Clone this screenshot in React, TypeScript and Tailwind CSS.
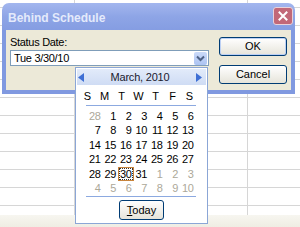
import React from "react";

const weeks: { d: number; muted?: boolean }[][] = [
  [{ d: 28, muted: true }, { d: 1 }, { d: 2 }, { d: 3 }, { d: 4 }, { d: 5 }, { d: 6 }],
  [{ d: 7 }, { d: 8 }, { d: 9 }, { d: 10 }, { d: 11 }, { d: 12 }, { d: 13 }],
  [{ d: 14 }, { d: 15 }, { d: 16 }, { d: 17 }, { d: 18 }, { d: 19 }, { d: 20 }],
  [{ d: 21 }, { d: 22 }, { d: 23 }, { d: 24 }, { d: 25 }, { d: 26 }, { d: 27 }],
  [{ d: 28 }, { d: 29 }, { d: 30 }, { d: 31 }, { d: 1, muted: true }, { d: 2, muted: true }, { d: 3, muted: true }],
  [4, 5, 6, 7, 8, 9, 10].map((d) => ({ d, muted: true })),
];

const dayNames = ["S", "M", "T", "W", "T", "F", "S"];

// spreadsheet row behind the dialog
const SheetRow = ({ h }: { h: string }) => (
  <div className={`flex ${h} border-b border-[#d6d6d6]`}>
    <div className="w-[75px] border-r border-[#d6d6d6]" />
    <div className="w-[173px] border-r border-[#d6d6d6]" />
    <div className="flex-1" />
  </div>
);

const XpButton = ({ children, className = "" }: { children: React.ReactNode; className?: string }) => (
  <div
    className={`flex items-center justify-center rounded-[3px] border border-[#003c74] bg-gradient-to-b from-white to-[#e6e4da] text-[11px] text-black ${className}`}
  >
    {children}
  </div>
);

export default function App() {
  return (
    <div
      className="relative w-[300px] h-[227px] overflow-hidden bg-white"
      style={{ fontFamily: '"Liberation Sans", Arial, sans-serif' }}
    >
      {/* sheet grid */}
      <div className="flex flex-col">
        <SheetRow h="h-[8px]" />
        {Array.from({ length: 11 }).map((_, i) => (
          <SheetRow key={i} h="h-[18px]" />
        ))}
        <div className="flex h-[9px]">
          <div className="w-[75px] border-r border-[#d6d6d6]" />
          <div className="w-[173px] border-r border-[#d6d6d6]" />
        </div>
        <div className="h-[12px] bg-gradient-to-b from-[#f7f6f0] to-[#efede3]" />
      </div>

      {/* dialog */}
      <div className="absolute left-[2px] top-[3px] w-[293px] h-[91px] flex flex-col">
        <div className="flex h-[27px] items-start justify-between rounded-t-[7px] bg-gradient-to-b from-[#a3b6ee] via-[#8ea5e6] to-[#859de2] pl-[6px] pr-[2px] pt-[4px]">
          <span className="mt-[4px] text-[12px] font-bold leading-[14px] text-[#e4eafb]">Behind Schedule</span>
          <div className="flex h-[18px] w-[20px] items-center justify-center rounded-[3px] border border-[#e9d2da] bg-[#c26878]">
            <svg width="10" height="10" viewBox="0 0 10 10">
              <path d="M1.5 1.5 L8.5 8.5 M8.5 1.5 L1.5 8.5" stroke="#fff" strokeWidth="2" strokeLinecap="square" />
            </svg>
          </div>
        </div>
        <div className="flex flex-1 border-x-[4px] border-b-[4px] border-[#8099e0] bg-[#ece9d8] px-[4px] pt-[6px]">
          <div className="flex w-[199px] flex-col">
            <span className="h-[13px] text-[11px] leading-[13px] tracking-[-0.3px] text-black">Status Date:</span>
            <div className="mt-[1px] flex h-[16px] items-center justify-between border border-[#7f9db9] bg-white pl-[3px] pr-[1px]">
              <span className="text-[11px] leading-[13px] tracking-[-0.3px] text-black">Tue 3/30/10</span>
              <div className="flex h-[13px] w-[13px] items-center justify-center rounded-[2px] bg-gradient-to-b from-[#cad9f8] to-[#adc4f2]">
                <svg width="9" height="7" viewBox="0 0 9 7">
                  <path d="M1 1.5 L4.5 5 L8 1.5" fill="none" stroke="#4d6185" strokeWidth="2" />
                </svg>
              </div>
            </div>
          </div>
          <div className="ml-[10px] mt-[1px] flex w-[68px] flex-col gap-[9px]">
            <XpButton className="h-[19px] shadow-[inset_0_0_0_1px_#bcd0f4]">OK</XpButton>
            <XpButton className="h-[19px]">Cancel</XpButton>
          </div>
        </div>
      </div>

      {/* calendar dropdown */}
      <div className="absolute left-[75px] top-[67px] flex h-[157px] w-[133px] flex-col border border-[#8ba6d6] bg-white p-[1px]">
        <div className="flex h-[16px] items-center justify-between bg-gradient-to-b from-[#e2ebfa] to-[#cfdcf4] pl-[1px] pr-[4px]">
          <svg width="6" height="9" viewBox="0 0 6 9">
            <path d="M6 0 L0 4.5 L6 9 Z" fill="#3e6fd4" />
          </svg>
          <span className="text-[11px] leading-[13px] tracking-[-0.2px] text-[#1a1a2e]">March, 2010</span>
          <svg width="6" height="9" viewBox="0 0 6 9">
            <path d="M0 0 L6 4.5 L0 9 Z" fill="#3e6fd4" />
          </svg>
        </div>
        <div className="ml-[2px] mt-[5px] grid h-[13px] grid-cols-[repeat(7,17px)] text-[11px] leading-[13px] text-black">
          {dayNames.map((n, i) => (
            <span key={i} className="text-center">
              {n}
            </span>
          ))}
        </div>
        <div className="ml-[9px] mt-[2px] h-[1px] w-[110px] bg-[#8ca9e0]" />
        <div className="ml-[8px] mt-[2px] flex flex-col">
          {weeks.map((w, r) => (
            <div key={r} className="grid h-[14.4px] grid-cols-[repeat(7,15.5px)] text-[11px] tracking-[-0.4px]">
              {w.map((c, i) => (
                <div key={i} className="flex items-center justify-end">
                  {r === 4 && c.d === 30 ? (
                    <span className="-mr-[1px] inline-flex h-[12px] items-center border border-dotted border-[#333] leading-[12px] text-black outline outline-1 outline-[#c8843c]">
                      30
                    </span>
                  ) : (
                    <span className={c.muted ? "text-[#aca899]" : "text-black"}>{c.d}</span>
                  )}
                </div>
              ))}
            </div>
          ))}
        </div>
        <div className="ml-[9px] mt-[2px] h-[1px] w-[110px] bg-[#8ca9e0]" />
        <div className="mt-[3px] flex justify-center">
          <XpButton className="h-[20px] w-[45px]">
            <span>
              <span className="underline">T</span>oday
            </span>
          </XpButton>
        </div>
      </div>
    </div>
  );
}
